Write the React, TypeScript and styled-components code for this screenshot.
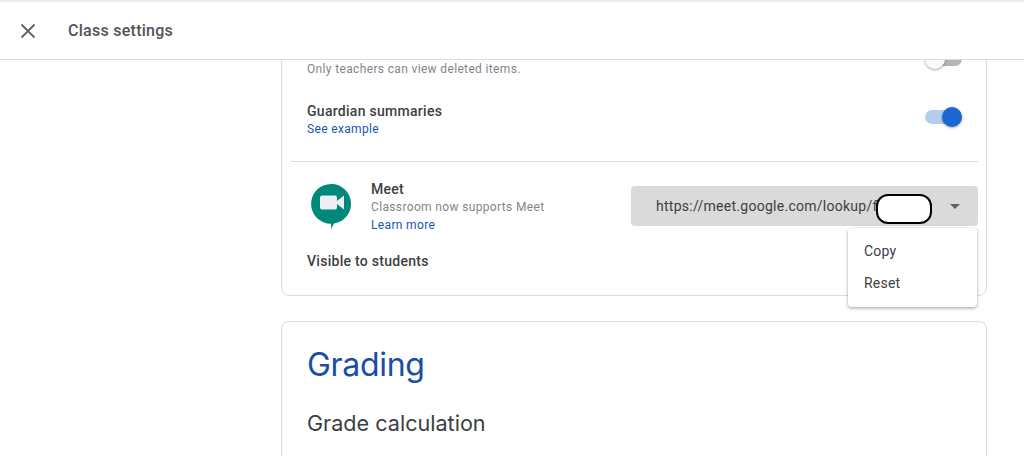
import { createGlobalStyle } from "styled-components";
import styled from "styled-components";

const GlobalStyle = createGlobalStyle`
    html, body {
        margin: 0;
        padding: 0;
        background: #fff;
    }
    body {
        font-family: Roboto, "Liberation Sans", sans-serif;
        color: #3c4043;
    }
`;

const Page = styled.div`
    width: 1024px;
    height: 456px;
    display: flex;
    flex-direction: column;
    overflow: hidden;
    background: #fff;
`;

const Header = styled.header`
    flex: none;
    height: 60px;
    box-sizing: border-box;
    display: flex;
    align-items: center;
    gap: 31px;
    padding-left: 19px;
    border-top: 2px solid #ececec;
    border-bottom: 1px solid #dadce0;
    background: #fff;
    position: relative;
    z-index: 2;
`;

const Title = styled.h1`
    margin: 0 0 1px;
    font-size: 16px;
    font-weight: 500;
    letter-spacing: 0.27px;
    color: #505358;
`;

const Scroller = styled.main`
    flex: 1;
    min-height: 0;
    overflow: hidden;
    padding-left: 281px;
`;

const Card = styled.section`
    width: 706px;
    box-sizing: border-box;
    border: 1px solid #dadce0;
    border-radius: 8px;
    background: #fff;
    position: relative;
`;

const SettingsCard = styled(Card)`
    margin-top: -30px;
    height: 266px;
`;

const GradingCard = styled(Card)`
    margin-top: 25px;
    height: 200px;
    padding: 23px 25px;
`;

const Row = styled.div`
    display: flex;
    justify-content: space-between;
    align-items: flex-start;
    padding: 0 24px 0 25px;
`;

const DeletedRow = styled(Row)`
    padding-top: 28px;
    height: 30px;
`;

const SummaryRow = styled(Row)`
    height: 60px;
    padding-top: 12px;
`;

const Hint = styled.div`
    font-size: 12px;
    line-height: 20px;
    letter-spacing: 0.35px;
    color: #80868b;
`;

const Label = styled.div`
    font-size: 14px;
    font-weight: 500;
    line-height: 20px;
    letter-spacing: 0.28px;
    color: #3c4043;
`;

const Link = styled.a`
    display: block;
    font-size: 12px;
    line-height: 16px;
    letter-spacing: 0.35px;
    color: #1a56b0;
`;

const Switch = styled.div<{ $on?: boolean }>`
    flex: none;
    position: relative;
    width: 37px;
    height: 20px;
    margin-top: ${(p) => (p.$on ? "6px" : "-10px")};

    &::before {
        content: "";
        position: absolute;
        left: 0;
        right: 0;
        top: 3px;
        bottom: 3px;
        border-radius: 7px;
        background: ${(p) => (p.$on ? "#b3cdf0" : "#b5b5b5")};
    }

    &::after {
        content: "";
        position: absolute;
        top: 0;
        left: ${(p) => (p.$on ? "17px" : "0")};
        width: 20px;
        height: 20px;
        border-radius: 50%;
        background: ${(p) => (p.$on ? "#1967d2" : "#fafafa")};
        box-shadow: 0 1px 3px rgba(0, 0, 0, 0.35);
    }
`;

const Divider = styled.hr`
    margin: 0 8px 0 9px;
    border: 0;
    border-top: 1px solid #dadce0;
`;

const MeetRow = styled.div`
    display: flex;
    align-items: flex-start;
    padding: 18px 8px 0 29px;
`;

const MeetLogo = styled.svg`
    flex: none;
    width: 40px;
    height: 46px;
    margin-top: 4px;
`;

const MeetText = styled.div`
    flex: 1;
    margin-left: 20px;
`;

const MeetName = styled(Label)`
    line-height: 18px;
`;

const MeetHint = styled(Hint)`
    line-height: 18px;
`;

const MeetLink = styled(Link)`
    line-height: 18px;
`;

const UrlSelect = styled.div`
    flex: none;
    width: 347px;
    height: 40px;
    margin-top: 6px;
    box-sizing: border-box;
    padding: 0 18px 0 25px;
    display: flex;
    align-items: center;
    justify-content: space-between;
    border-radius: 4px;
    background: #dadada;
    font-size: 14px;
    letter-spacing: 0.27px;
    color: #3c4043;
    position: relative;
`;

const Caret = styled.span`
    width: 0;
    height: 0;
    border-left: 5px solid transparent;
    border-right: 5px solid transparent;
    border-top: 5px solid #5f6368;
`;

const Redaction = styled.span`
    position: absolute;
    left: 245px;
    top: 8px;
    width: 56px;
    height: 30px;
    box-sizing: border-box;
    border: 2px solid #000;
    border-radius: 12px;
    background: #fff;
`;

const VisibleRow = styled(Label)`
    margin: 17px 0 0 25px;
`;

const Menu = styled.ul`
    position: absolute;
    left: 566px;
    top: 197px;
    width: 129px;
    height: 79px;
    box-sizing: border-box;
    margin: 0;
    padding: 7px 0;
    list-style: none;
    border-radius: 4px;
    background: #fff;
    box-shadow: 0 1px 3px rgba(60, 64, 67, 0.4), 0 2px 5px rgba(60, 64, 67, 0.12);
    z-index: 1;
`;

const MenuItem = styled.li`
    height: 32px;
    line-height: 32px;
    padding-left: 16px;
    font-size: 14px;
    letter-spacing: 0.2px;
    color: #3c4043;
`;

const SectionTitle = styled.h2`
    margin: 0;
    font-family: Inter, Roboto, sans-serif;
    font-size: 32px;
    font-weight: 400;
    line-height: 40px;
    letter-spacing: -0.3px;
    color: #174ea6;
`;

const SectionSubtitle = styled.h3`
    margin: 24px 0 0;
    font-family: Inter, Roboto, sans-serif;
    font-size: 21.6px;
    font-weight: 400;
    line-height: 28px;
    color: #3c4043;
`;

export default function App() {
    return (
        <>
            <GlobalStyle />
            <Page>
                <Header>
                    <svg width="18" height="18" viewBox="0 0 18 18" fill="none" stroke="#5f6368" strokeWidth="1.8">
                        <path d="M2.5 2.5 15.5 15.5M15.5 2.5 2.5 15.5" />
                    </svg>
                    <Title>Class settings</Title>
                </Header>
                <Scroller>
                    <SettingsCard>
                        <DeletedRow>
                            <Hint>Only teachers can view deleted items.</Hint>
                            <Switch />
                        </DeletedRow>
                        <SummaryRow>
                            <div>
                                <Label>Guardian summaries</Label>
                                <Link>See example</Link>
                            </div>
                            <Switch $on />
                        </SummaryRow>
                        <Divider />
                        <MeetRow>
                            <MeetLogo viewBox="0 0 40 46">
                                <path d="M20 0a19.8 19.8 0 0 1 3 39.4L20 45v-5.2A19.9 19.9 0 0 1 20 0z" fill="#00897b" />
                                <path d="M9 13.5a2 2 0 0 1 2-2h13a2 2 0 0 1 2 2v10a2 2 0 0 1-2 2H11a2 2 0 0 1-2-2z" fill="#eceff1" />
                                <path d="M26 17l7-5.5v14L26 20z" fill="#eceff1" />
                            </MeetLogo>
                            <MeetText>
                                <MeetName>Meet</MeetName>
                                <MeetHint>Classroom now supports Meet</MeetHint>
                                <MeetLink>Learn more</MeetLink>
                            </MeetText>
                            <UrlSelect>
                                https://meet.google.com/lookup/f
                                <Caret />
                                <Redaction />
                            </UrlSelect>
                        </MeetRow>
                        <VisibleRow>Visible to students</VisibleRow>
                        <Menu>
                            <MenuItem>Copy</MenuItem>
                            <MenuItem>Reset</MenuItem>
                        </Menu>
                    </SettingsCard>
                    <GradingCard>
                        <SectionTitle>Grading</SectionTitle>
                        <SectionSubtitle>Grade calculation</SectionSubtitle>
                    </GradingCard>
                </Scroller>
            </Page>
        </>
    );
}
